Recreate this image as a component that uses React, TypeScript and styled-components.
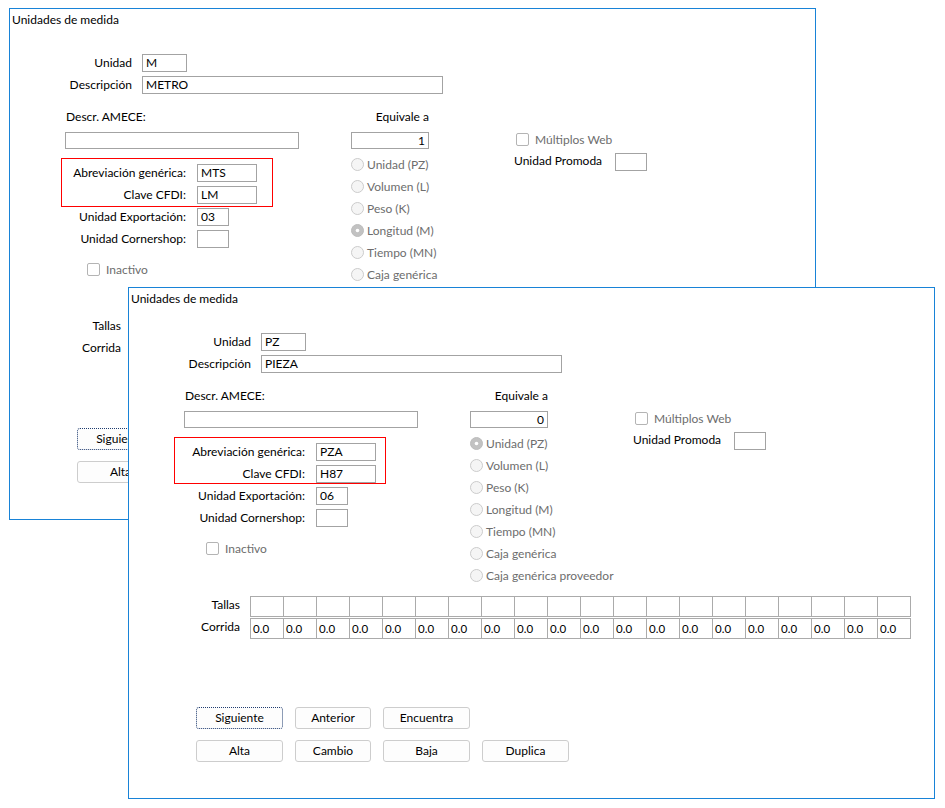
import React from "react";
import styled, { createGlobalStyle } from "styled-components";

const GlobalStyle = createGlobalStyle`
  html, body { margin: 0; padding: 0; background: #ffffff; }
  body {
    font-family: Lato, "Noto Sans", "Liberation Sans", sans-serif;
    font-size: 12px;
    color: #000;
  }
`;

const Desktop = styled.div`
  position: relative;
  width: 945px;
  height: 808px;
  overflow: hidden;
  background: #fff;
`;

// each form window sits on the desktop at its own spot
const Frame = styled.section<{ $x: number; $y: number }>`
  position: absolute;
  left: ${(p) => p.$x}px;
  top: ${(p) => p.$y}px;
  width: 807px;
  height: 512px;
  box-sizing: border-box;
  border: 1px solid #1883d7;
  background: #fff;
  display: flex;
  flex-direction: column;
`;

const Caption = styled.div`
  height: 16px;
  line-height: 16px;
  padding: 3px 0 0 2px;
`;

const FieldGrid = styled.div<{ $labelW: number; $gap: number }>`
  display: grid;
  grid-template-columns: ${(p) => p.$labelW}px auto;
  column-gap: ${(p) => p.$gap}px;
  row-gap: 4px;
  justify-items: start;
  align-items: center;
`;

const HeaderFields = styled(FieldGrid)`
  margin: 26px 0 0 55px;
`;

const FieldLabel = styled.span`
  justify-self: end;
  line-height: 18px;
  white-space: nowrap;
`;

const TextBox = styled.div<{ $w: number; $h?: number; $right?: boolean }>`
  box-sizing: border-box;
  width: ${(p) => p.$w}px;
  height: ${(p) => p.$h ?? 18}px;
  border: 1px solid #a3a3a3;
  background: #fff;
  padding: ${(p) => (p.$right ? "0 3px 0 0" : "0 0 0 3px")};
  line-height: ${(p) => (p.$h ?? 18) - 2}px;
  text-align: ${(p) => (p.$right ? "right" : "left")};
  white-space: nowrap;
  overflow: hidden;
`;

const MainArea = styled.div`
  display: flex;
  align-items: flex-start;
  margin-top: 15px;
  height: 198px;
`;

const LeftCol = styled.div`
  width: 290px;
  margin-left: 51px;
  display: flex;
  flex-direction: column;
`;

const SmallHeading = styled.span<{ $w?: number; $right?: boolean }>`
  display: block;
  line-height: 16px;
  width: ${(p) => (p.$w ? `${p.$w}px` : "auto")};
  text-align: ${(p) => (p.$right ? "right" : "left")};
  white-space: nowrap;
`;

const AmeceHeading = styled(SmallHeading)`
  margin-left: 5px;
`;

const AmeceBox = styled(TextBox)`
  margin: 7px 0 0 4px;
`;

// hand-drawn highlight: its offset differs a little from one capture to the other
const RedFrame = styled.div<{ $shift: number; $bottom: number }>`
  margin: 9px 0 ${(p) => 2 - p.$bottom}px ${(p) => -p.$shift}px;
  width: 212px;
  box-sizing: border-box;
  border: 1px solid #ff0000;
  padding: 5px 0 ${(p) => p.$bottom}px ${(p) => p.$shift}px;
`;

const ExportFields = styled(FieldGrid)`
  margin-top: 1px;
`;

const CheckRow = styled.label<{ $indent: number; $top: number }>`
  display: flex;
  align-items: center;
  gap: 6px;
  height: 16px;
  margin: ${(p) => p.$top}px 0 0 ${(p) => p.$indent}px;
  color: #6d6d6d;
  white-space: nowrap;
`;

const CheckSquare = styled.span`
  box-sizing: border-box;
  width: 13px;
  height: 13px;
  border: 1px solid #b4b4b4;
  border-radius: 2px;
  background: #fff;
`;

const MidCol = styled.div`
  width: 163px;
  display: flex;
  flex-direction: column;
`;

const EquivBox = styled(TextBox)`
  margin-top: 7px;
`;

const RadioList = styled.div`
  margin-top: 4px;
  display: flex;
  flex-direction: column;
`;

const RadioRow = styled.div`
  display: flex;
  align-items: center;
  gap: 3px;
  height: 22px;
  color: #6d6d6d;
  white-space: nowrap;
`;

const RightCol = styled.div`
  margin-top: 22px;
  display: flex;
  flex-direction: column;
`;

const PromodaRow = styled.div`
  display: flex;
  align-items: center;
  margin-top: 6px;
`;

const PromodaLabel = styled.span`
  width: 101px;
  line-height: 16px;
  margin-top: -2px;
`;

const SizesArea = styled.div`
  display: flex;
  margin-top: 10px;
`;

const SizesLabels = styled.div`
  width: 111px;
  margin-right: 10px;
  display: flex;
  flex-direction: column;
  gap: 1px;
`;

const SizesLabel = styled.span`
  height: 21px;
  line-height: 17px;
  text-align: right;
`;

const SizesTable = styled.div`
  display: flex;
  flex-direction: column;
  gap: 1px;
`;

const SizesRow = styled.div`
  display: flex;
`;

const SizeCell = styled.div`
  box-sizing: border-box;
  width: 34px;
  height: 21px;
  border: 1px solid #ababab;
  padding: 1px 0 0 2px;
  line-height: 18px;
  font-size: 11.5px;
  & + & {
    margin-left: -1px;
  }
`;

const ButtonArea = styled.div`
  margin: 68px 0 0 67px;
  display: flex;
  flex-direction: column;
  gap: 11px;
`;

const ButtonRow = styled.div`
  display: flex;
  gap: 12px;
`;

const PushButton = styled.button<{ $w: number; $focused?: boolean }>`
  box-sizing: border-box;
  width: ${(p) => p.$w}px;
  height: 22px;
  padding: 0;
  border: 1px ${(p) => (p.$focused ? "dotted #1f3c70" : "solid #cdcdcd")};
  border-radius: 3px;
  background: #fdfdfd;
  font: inherit;
  color: #000;
  line-height: 20px;
  text-align: center;
`;

function Radio({ checked, label }: { checked?: boolean; label: string }) {
  return (
    <RadioRow>
      <svg width="13" height="13" viewBox="0 0 13 13">
        <circle
          cx="6.5"
          cy="6.5"
          r="6"
          fill={checked ? "#c2c2c2" : "#f5f5f5"}
          stroke={checked ? "#bcbcbc" : "#cbcbcb"}
        />
        {checked && <circle cx="6.5" cy="6.5" r="1.8" fill="#ffffff" />}
      </svg>
      {label}
    </RadioRow>
  );
}

const RADIOS = [
  "Unidad (PZ)",
  "Volumen (L)",
  "Peso (K)",
  "Longitud (M)",
  "Tiempo (MN)",
  "Caja genérica",
  "Caja genérica proveedor",
];

type UnitData = {
  x: number;
  y: number;
  unidad: string;
  descripcion: string;
  equivale: string;
  abrev: string;
  clave: string;
  exportacion: string;
  medida: number;
  markShift: number;
  markBottom: number;
};

const WINDOWS: UnitData[] = [
  {
    x: 9, y: 8, unidad: "M", descripcion: "METRO", equivale: "1", abrev: "MTS",
    clave: "LM", exportacion: "03", medida: 3, markShift: 0, markBottom: 2,
  },
  {
    x: 128, y: 287, unidad: "PZ", descripcion: "PIEZA", equivale: "0", abrev: "PZA",
    clave: "H87", exportacion: "06", medida: 0, markShift: 6, markBottom: 0,
  },
];

const SIZE_COLUMNS = Array.from({ length: 20 }, (_, i) => i);

function UnitWindow({ data }: { data: UnitData }) {
  return (
    <Frame $x={data.x} $y={data.y}>
      <Caption>Unidades de medida</Caption>

      <HeaderFields $labelW={67} $gap={10}>
        <FieldLabel>Unidad</FieldLabel>
        <TextBox $w={45}>{data.unidad}</TextBox>
        <FieldLabel>Descripción</FieldLabel>
        <TextBox $w={301}>{data.descripcion}</TextBox>
      </HeaderFields>

      <MainArea>
        <LeftCol>
          <AmeceHeading>Descr. AMECE:</AmeceHeading>
          <AmeceBox $w={234} $h={17} />
          <RedFrame $shift={data.markShift} $bottom={data.markBottom}>
            <FieldGrid $labelW={124} $gap={11}>
              <FieldLabel>Abreviación genérica:</FieldLabel>
              <TextBox $w={60}>{data.abrev}</TextBox>
              <FieldLabel>Clave CFDI:</FieldLabel>
              <TextBox $w={60}>{data.clave}</TextBox>
            </FieldGrid>
          </RedFrame>
          <ExportFields $labelW={125} $gap={11}>
            <FieldLabel>Unidad Exportación:</FieldLabel>
            <TextBox $w={32}>{data.exportacion}</TextBox>
            <FieldLabel>Unidad Cornershop:</FieldLabel>
            <TextBox $w={32} />
          </ExportFields>
          <CheckRow $indent={26} $top={13}>
            <CheckSquare />
            Inactivo
          </CheckRow>
        </LeftCol>

        <MidCol>
          <SmallHeading $w={78} $right>
            Equivale a
          </SmallHeading>
          <EquivBox $w={78} $h={17} $right>
            {data.equivale}
          </EquivBox>
          <RadioList>
            {RADIOS.map((r, i) => (
              <Radio key={r} label={r} checked={i === data.medida} />
            ))}
          </RadioList>
        </MidCol>

        <RightCol>
          <CheckRow $indent={2} $top={0}>
            <CheckSquare />
            Múltiplos Web
          </CheckRow>
          <PromodaRow>
            <PromodaLabel>Unidad Promoda</PromodaLabel>
            <TextBox $w={32} />
          </PromodaRow>
        </RightCol>
      </MainArea>

      <SizesArea>
        <SizesLabels>
          <SizesLabel>Tallas</SizesLabel>
          <SizesLabel>Corrida</SizesLabel>
        </SizesLabels>
        <SizesTable>
          <SizesRow>
            {SIZE_COLUMNS.map((c) => (
              <SizeCell key={c} />
            ))}
          </SizesRow>
          <SizesRow>
            {SIZE_COLUMNS.map((c) => (
              <SizeCell key={c}>0.0</SizeCell>
            ))}
          </SizesRow>
        </SizesTable>
      </SizesArea>

      <ButtonArea>
        <ButtonRow>
          <PushButton $w={87} $focused>
            Siguiente
          </PushButton>
          <PushButton $w={76}>Anterior</PushButton>
          <PushButton $w={87}>Encuentra</PushButton>
        </ButtonRow>
        <ButtonRow>
          <PushButton $w={87}>Alta</PushButton>
          <PushButton $w={76}>Cambio</PushButton>
          <PushButton $w={87}>Baja</PushButton>
          <PushButton $w={87}>Duplica</PushButton>
        </ButtonRow>
      </ButtonArea>
    </Frame>
  );
}

export default function App() {
  return (
    <>
      <GlobalStyle />
      <Desktop>
        {WINDOWS.map((w) => (
          <UnitWindow key={w.unidad} data={w} />
        ))}
      </Desktop>
    </>
  );
}
